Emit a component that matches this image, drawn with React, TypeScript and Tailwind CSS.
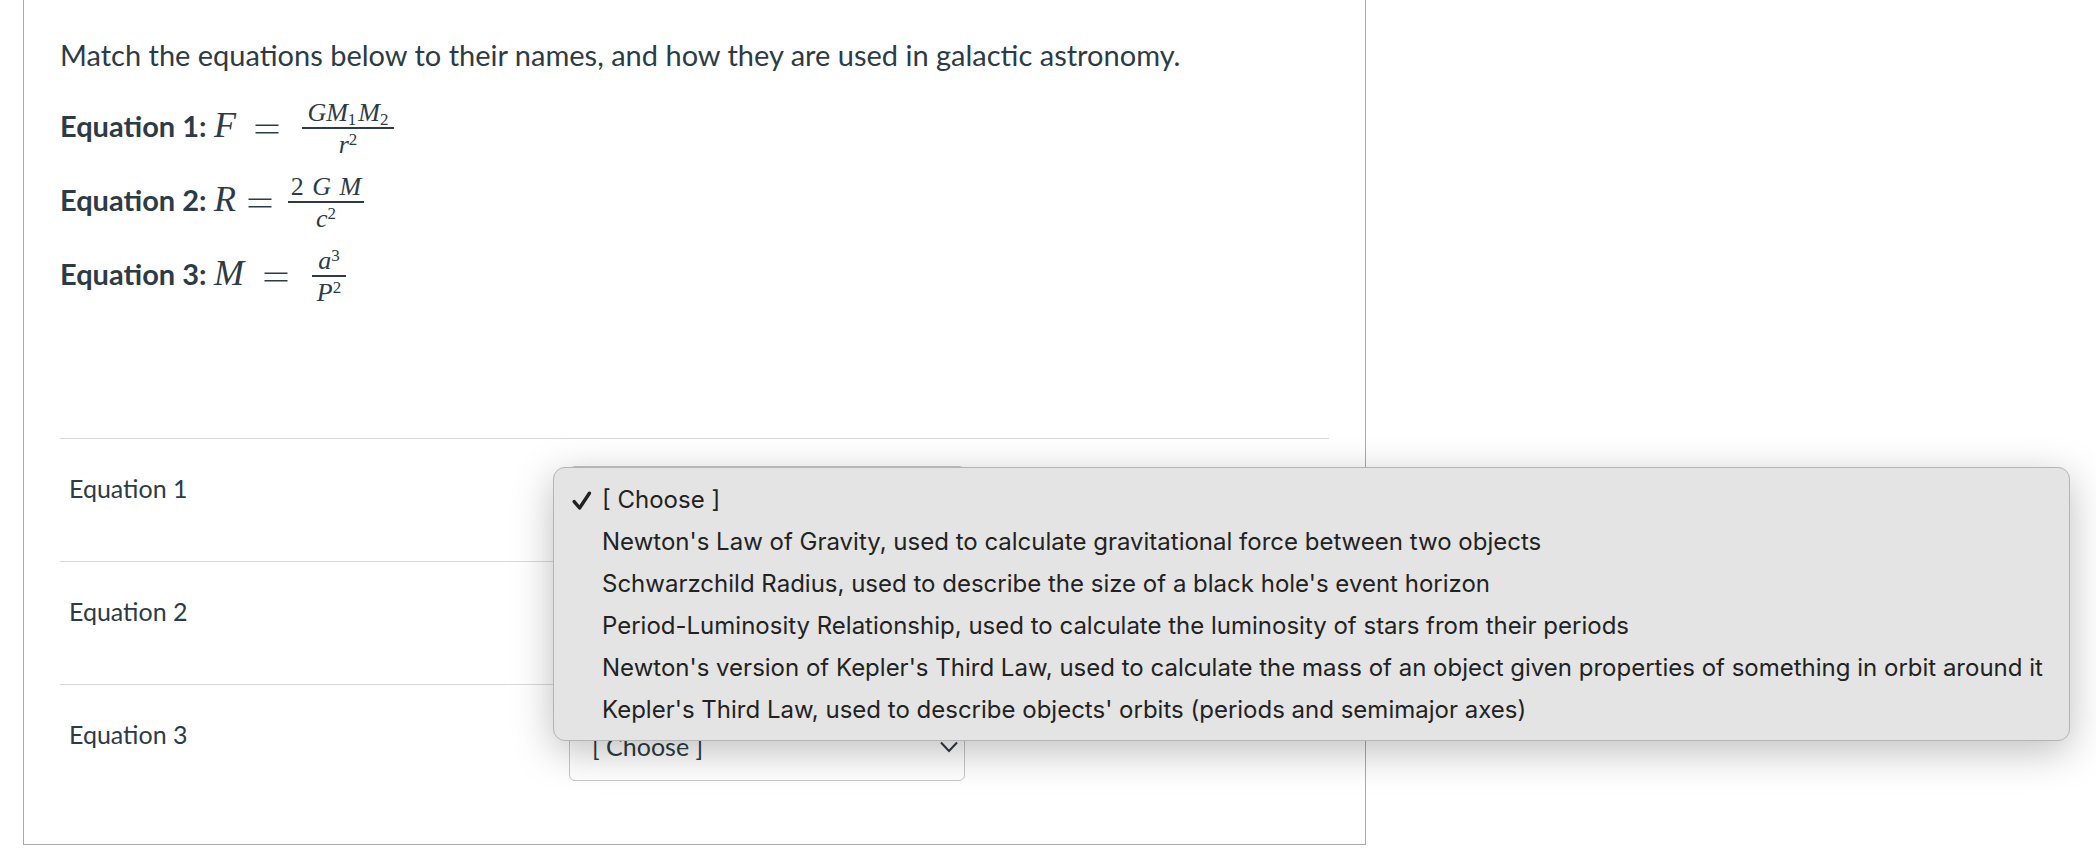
import type { ReactNode } from "react";
import { useState } from "react";
import { cva } from "class-variance-authority";

const options = [
  "[ Choose ]",
  "Newton's Law of Gravity, used to calculate gravitational force between two objects",
  "Schwarzchild Radius, used to describe the size of a black hole's event horizon",
  "Period-Luminosity Relationship, used to calculate the luminosity of stars from their periods",
  "Newton's version of Kepler's Third Law, used to calculate the mass of an object given properties of something in orbit around it",
  "Kepler's Third Law, used to describe objects' orbits (periods and semimajor axes)",
];

const rows = ["Equation 1", "Equation 2", "Equation 3"];

const fraction = cva(
  "ml-1 inline-flex flex-col items-stretch align-middle text-center text-[26px] leading-7",
  {
    variants: {
      width: {
        wide: "w-[92px]",
        medium: "w-[76px]",
        narrow: "w-[34px]",
      },
    },
  }
);

function Fraction({
  top,
  bottom,
  width,
}: {
  top: ReactNode;
  bottom: ReactNode;
  width: "wide" | "medium" | "narrow";
}) {
  return (
    <span className={fraction({ width })}>
      <span className="h-8 border-b-2 border-[#2d3b45] pt-0.5 whitespace-nowrap">
        {top}
      </span>
      <span className="h-8 pt-0.5 whitespace-nowrap">{bottom}</span>
    </span>
  );
}

function Equals() {
  return (
    <svg viewBox="0 0 24 10" className="inline-block h-[10px] w-6" aria-label="=">
      <path d="M0.5 1.25H23.5M0.5 8.75H23.5" stroke="currentColor" strokeWidth="1.5" />
    </svg>
  );
}

function Equation({ name, children }: { name: string; children: ReactNode }) {
  return (
    <p className="flex h-[74px] items-center whitespace-nowrap">
      <span>
        <strong className="font-bold">{name}:</strong>{" "}
        <span className="font-['Liberation_Serif',serif] text-[36px] leading-9">
          {children}
        </span>
      </span>
    </p>
  );
}

function Menu({ selected, onSelect }: { selected: string; onSelect: (value: string) => void }) {
  return (
    <ul
      role="listbox"
      aria-label="Equation 1 answers"
      className="absolute top-px -left-4 z-10 w-max rounded-xl border border-[#b4b4b4] bg-[#e4e4e4] pt-[11px] pr-[26px] pb-[9px] pl-[17px] font-[Inter,sans-serif] text-[24px] leading-[42px] text-[#222] shadow-[0_10px_40px_rgba(0,0,0,0.26)]"
    >
      {options.map((option) => (
        <li
          key={option}
          role="option"
          aria-selected={option === selected}
          onClick={() => onSelect(option)}
          className="flex items-center whitespace-nowrap"
        >
          <span className="flex w-[31px] shrink-0 items-center">
            {option === selected && (
              <svg viewBox="0 0 22 22" className="size-[22px]" fill="none">
                <path
                  d="M3.2 12.6 8.6 19 18.4 4.2"
                  stroke="currentColor"
                  strokeWidth="3.4"
                  strokeLinecap="round"
                  strokeLinejoin="round"
                />
              </svg>
            )}
          </span>
          {option}
        </li>
      ))}
    </ul>
  );
}

function MatchRow({ label, open }: { label: string; open?: boolean }) {
  const [value, setValue] = useState(options[0]);
  const id = label.toLowerCase().replace(" ", "-");

  return (
    <div className="flex border-t border-[#d8d8d8] pt-[27px] pb-[26px]">
      <label htmlFor={id} className="w-[509px] shrink-0 pt-1.5 pl-[9px] text-[25px] leading-8">
        {label}
      </label>
      <div className="relative w-[396px]">
        <select
          id={id}
          value={value}
          onChange={(e) => setValue(e.target.value)}
          className="h-[69px] w-full appearance-none rounded-md border border-[#c4c8cb] bg-white px-[22px] text-[25px]"
        >
          {options.map((option) => (
            <option key={option}>{option}</option>
          ))}
        </select>
        <svg
          viewBox="0 0 18 12"
          className="pointer-events-none absolute top-[29px] right-[7px] h-3 w-[18px]"
          fill="none"
        >
          <path d="M1 1.5 9 10 17 1.5" stroke="currentColor" strokeWidth="2" />
        </svg>
        {open && <Menu selected={value} onSelect={setValue} />}
      </div>
    </div>
  );
}

export default function App() {
  return (
    <main className="overflow-x-clip bg-white px-[23px] pb-[3px] font-[Lato,sans-serif] text-[#2d3b45]">
      <section className="max-w-[1343px] border border-t-0 border-[#aaa] px-9 pt-[35px] pb-[37px]">
        <div className="text-[29px] leading-10">
          <p className="pb-[17px]">
            Match the equations below to their names, and how they are used in
            galactic astronomy.
          </p>
          <Equation name="Equation 1">
            <i>F</i>
            <span className="px-[19px]">
              <Equals />
            </span>
            <Fraction
              width="wide"
              top={
                <>
                  <i>GM</i>
                  <sub className="pr-0.5 text-[17px]">1</sub>
                  <i>M</i>
                  <sub className="text-[17px]">2</sub>
                </>
              }
              bottom={
                <>
                  <i>r</i>
                  <sup className="text-[17px]">2</sup>
                </>
              }
            />
          </Equation>
          <Equation name="Equation 2">
            <i>R</i>
            <span className="px-3">
              <Equals />
            </span>
            <Fraction
              width="medium"
              top={
                <>
                  2 <i className="px-0.5">G</i> <i>M</i>
                </>
              }
              bottom={
                <>
                  <i>c</i>
                  <sup className="text-[17px]">2</sup>
                </>
              }
            />
          </Equation>
          <Equation name="Equation 3">
            <i>M</i>
            <span className="px-5">
              <Equals />
            </span>
            <Fraction
              width="narrow"
              top={
                <>
                  <i>a</i>
                  <sup className="text-[17px]">3</sup>
                </>
              }
              bottom={
                <>
                  <i>P</i>
                  <sup className="text-[17px]">2</sup>
                </>
              }
            />
          </Equation>
        </div>
        <div className="pt-[124px]">
          {rows.map((label, i) => (
            <MatchRow key={label} label={label} open={i === 0} />
          ))}
        </div>
      </section>
    </main>
  );
}
